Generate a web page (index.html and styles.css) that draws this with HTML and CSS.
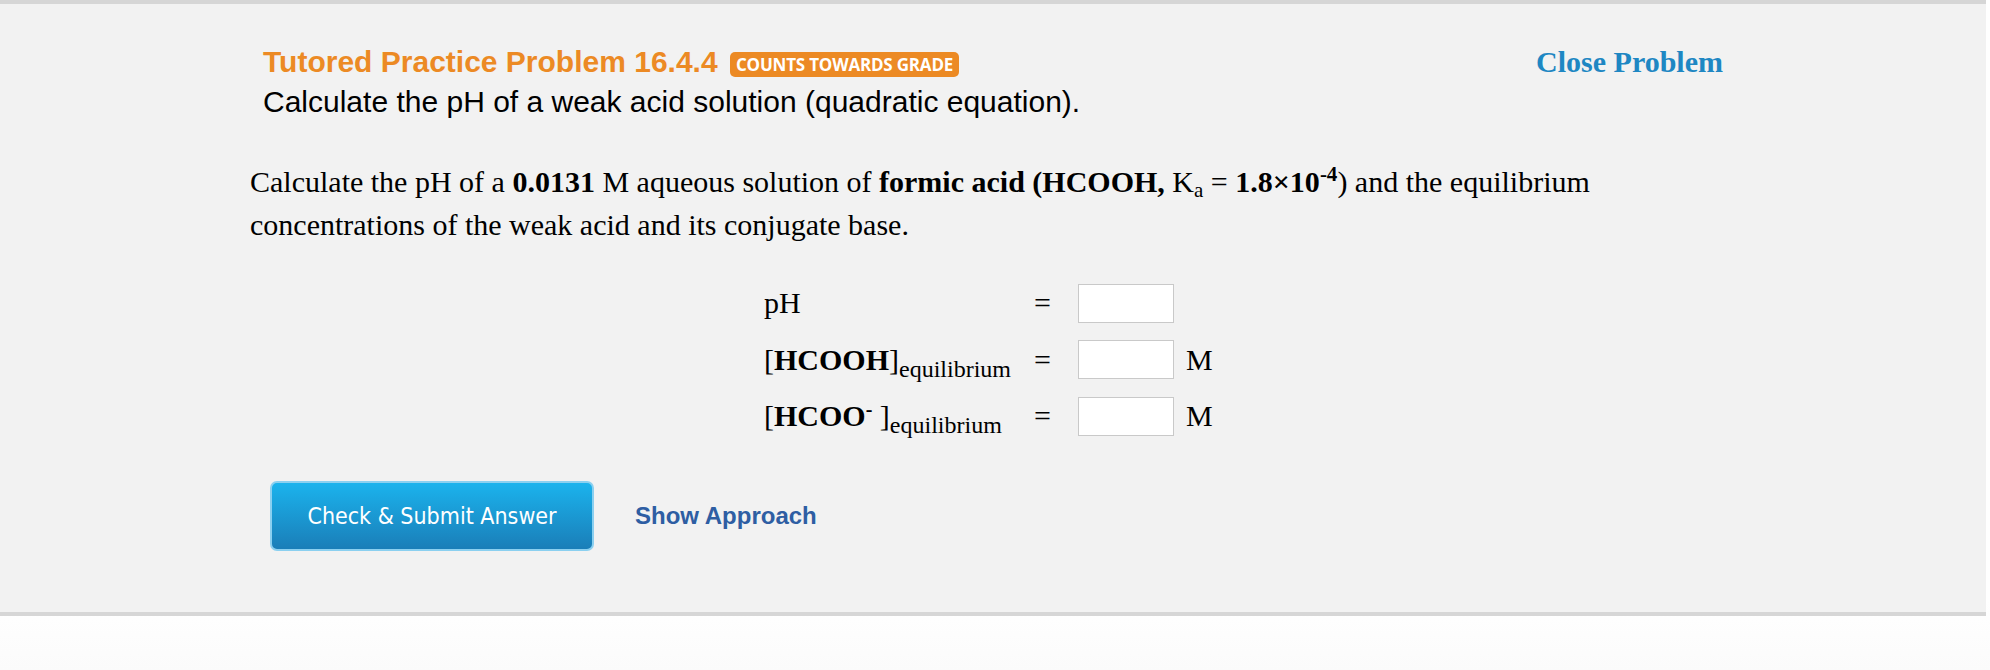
FILE: index.html
```html
<!DOCTYPE html>
<html lang="en">
<head>
<meta charset="utf-8">
<title>Tutored Practice Problem 16.4.4</title>
<link rel="stylesheet" href="styles.css">
</head>
<body>
<section class="panel">
  <div class="content">
    <header class="head">
      <div class="head-main">
        <h1 class="title">Tutored Practice Problem 16.4.4 <span class="badge">COUNTS TOWARDS GRADE</span></h1>
        <p class="subtitle">Calculate the pH of a weak acid solution (quadratic equation).</p>
      </div>
      <a class="close" href="#">Close Problem</a>
    </header>

    <p class="question">Calculate the pH of a <b>0.0131</b> M aqueous solution of <b>formic acid (HCOOH,</b> K<sub>a</sub> = <b>1.8×10<sup>-4</sup></b>) and the equilibrium concentrations of the weak acid and its conjugate base.</p>

    <div class="answers">
      <div class="label">pH</div>
      <div class="eq">=</div>
      <div class="field"><input class="box" type="text"></div>
      <div class="unit"></div>

      <div class="label">[<b>HCOOH</b>]<span class="low">equilibrium</span></div>
      <div class="eq">=</div>
      <div class="field"><input class="box" type="text"></div>
      <div class="unit">M</div>

      <div class="label">[<b>HCOO<sup class="charge">-</sup></b> ]<span class="low">equilibrium</span></div>
      <div class="eq">=</div>
      <div class="field"><input class="box" type="text"></div>
      <div class="unit">M</div>
    </div>

    <div class="actions">
      <button class="submit" type="button">Check &amp; Submit Answer</button>
      <a class="approach" href="#">Show Approach</a>
    </div>
  </div>
</section>
</body>
</html>
```

FILE: styles.css
```css
html, body {
  margin: 0;
  padding: 0;
}

body {
  width: 1990px;
  height: 670px;
  overflow: hidden;
  background: linear-gradient(#ffffff 600px, #fbfbfb 670px);
  font-family: "Liberation Serif", serif;
  color: #000;
}

.panel {
  width: 1986px;
  box-sizing: border-box;
  background: #f2f2f2;
  border-top: 4px solid #d6d6d6;
  border-bottom: 4px solid #d6d6d6;
  padding: 38px 0 61px;
}

.content {
  margin-left: 250px;
  width: 1473px;
}

.head {
  display: flex;
  justify-content: space-between;
  align-items: flex-start;
  padding-left: 13px;
}

.title {
  margin: 0;
  font: 700 30px/40px "Liberation Sans", Arial, sans-serif;
  color: #ec8a24;
}

.badge {
  display: inline-block;
  vertical-align: 1px;
  margin-left: 4px;
  padding: 0 6px;
  height: 25px;
  border-radius: 5px;
  background: #ec8a24;
  color: #fff;
  font: 700 17px/25px "Open Sans", sans-serif;
  letter-spacing: -0.2px;
}

.subtitle {
  margin: 0;
  font: 400 30px/40px "Liberation Sans", Arial, sans-serif;
  color: #000;
}

.close {
  font: 700 30px/40px "Liberation Serif", serif;
  color: #1e87c3;
  text-decoration: none;
}

.question {
  margin: 38px 0 0;
  font: 400 30px/43px "Liberation Serif", serif;
}

.question sub,
.question sup {
  font-size: 21px;
  line-height: 0;
}

.question sub {
  vertical-align: -5px;
}

.question sup {
  vertical-align: 11px;
}

.answers {
  display: grid;
  grid-template-columns: 270px 44px 108px 23px;
  grid-auto-rows: 56.5px;
  align-items: center;
  width: max-content;
  margin: 29px auto 0;
  font: 400 30px/34px "Liberation Serif", serif;
}

.label {
  white-space: nowrap;
}

.low {
  font-size: 24px;
  vertical-align: -7px;
  line-height: 0;
}

.charge {
  font-size: 20px;
  line-height: 0;
  vertical-align: 10px;
}

.box {
  display: block;
  width: 96px;
  height: 39px;
  box-sizing: border-box;
  margin: 0;
  border: 1px solid #c9c9c9;
  background: #fff;
}

.actions {
  display: flex;
  align-items: center;
  gap: 41px;
  margin-top: 36.5px;
  padding-left: 20px;
}

.submit {
  width: 324px;
  height: 70px;
  box-sizing: border-box;
  border: 2px solid #8bd0f0;
  border-radius: 7px;
  background: linear-gradient(#1bb3ed, #1a7eb8);
  color: #fff;
  font-family: "DejaVu Sans Condensed", "DejaVu Sans", sans-serif;
  font-stretch: condensed;
  font-size: 23px;
  padding: 0;
}

.approach {
  font: 700 24px/30px "Liberation Sans", Arial, sans-serif;
  color: #2e5ea3;
  text-decoration: none;
}
```
